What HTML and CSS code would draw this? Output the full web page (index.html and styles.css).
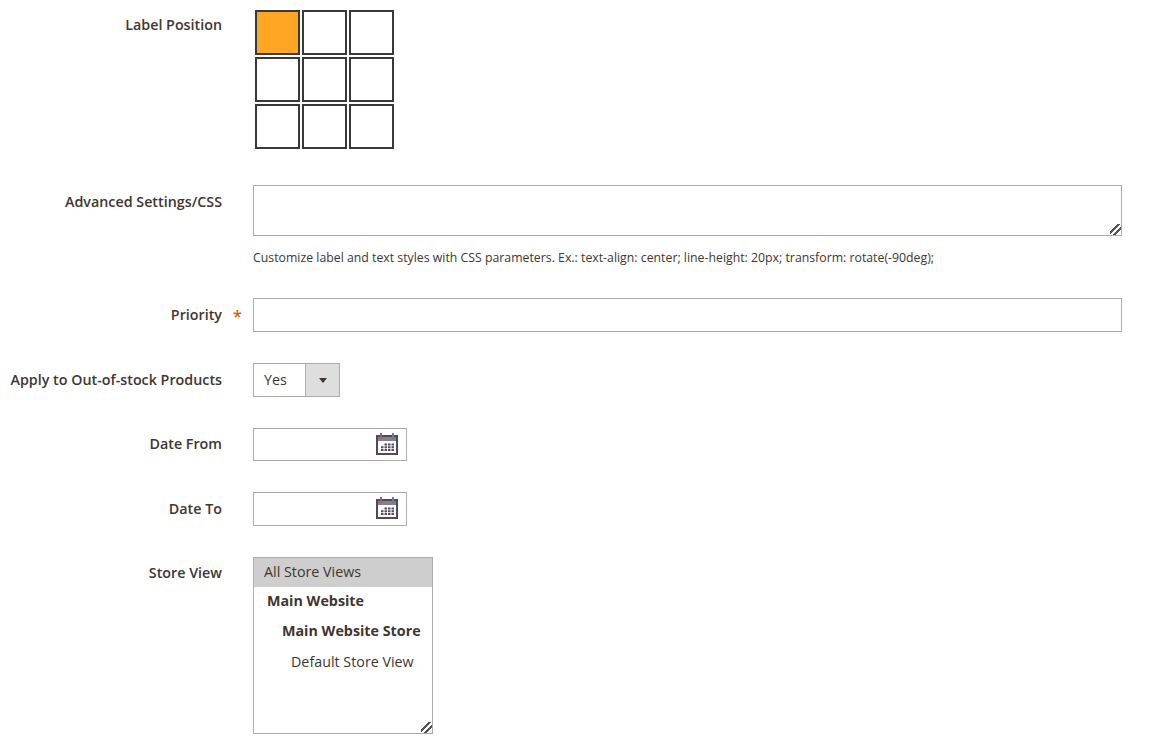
FILE: index.html
```html
<!DOCTYPE html>
<html lang="en">
<head>
    <meta charset="UTF-8">
    <title>Label Settings</title>
    <link rel="stylesheet" href="styles.css">
</head>
<body>
    <form class="settings">
        <div class="field field-position">
            <label class="field-label">Label Position</label>
            <span class="field-mark"></span>
            <div class="position-grid">
                <span class="cell cell-active"></span>
                <span class="cell"></span>
                <span class="cell"></span>
                <span class="cell"></span>
                <span class="cell"></span>
                <span class="cell"></span>
                <span class="cell"></span>
                <span class="cell"></span>
                <span class="cell"></span>
            </div>
        </div>

        <div class="field field-css">
            <label class="field-label">Advanced Settings/CSS</label>
            <span class="field-mark"></span>
            <div class="field-control">
                <textarea class="textarea"></textarea>
                <p class="note">Customize label and text styles with CSS parameters. Ex.: text-align: center; line-height: 20px; transform: rotate(-90deg);</p>
            </div>
        </div>

        <div class="field field-priority">
            <label class="field-label">Priority</label>
            <span class="field-mark">*</span>
            <input class="input input-wide" type="text">
        </div>

        <div class="field field-stock">
            <label class="field-label">Apply to Out-of-stock Products</label>
            <span class="field-mark"></span>
            <div class="select">
                <span class="select-value">Yes</span>
                <span class="select-arrow"></span>
            </div>
        </div>

        <div class="field field-from">
            <label class="field-label">Date From</label>
            <span class="field-mark"></span>
            <div class="date">
                <svg class="date-icon" viewBox="0 0 22 22" width="22" height="22">
                    <rect x="1" y="3" width="20" height="18" fill="#fff" stroke="#514b50" stroke-width="2"/>
                    <rect x="2" y="4" width="18" height="4" fill="#8a7f83"/>
                    <rect x="4" y="0" width="2" height="6" fill="#9a5f7c"/>
                    <rect x="16" y="0" width="2" height="6" fill="#5f7fa8"/>
                    <path d="M8.500 10.500h2.500v2h-2.500zM12 10.500h2.500v2H12zM15.500 10.500H18v2h-2.500zM5 13.200h2.500v2H5zM8.500 13.200h2.500v2h-2.500zM12 13.200h2.500v2H12zM15.500 13.200H18v2h-2.500zM5 15.900h2.500v2H5zM8.500 15.900h2.500v2h-2.500zM12 15.900h2.500v2H12zM15.500 15.900H18v2h-2.500z" fill="#5a4a68"/>
                </svg>
            </div>
        </div>

        <div class="field field-to">
            <label class="field-label">Date To</label>
            <span class="field-mark"></span>
            <div class="date date-tall">
                <svg class="date-icon" viewBox="0 0 22 22" width="22" height="22">
                    <rect x="1" y="3" width="20" height="18" fill="#fff" stroke="#514b50" stroke-width="2"/>
                    <rect x="2" y="4" width="18" height="4" fill="#8a7f83"/>
                    <rect x="4" y="0" width="2" height="6" fill="#9a5f7c"/>
                    <rect x="16" y="0" width="2" height="6" fill="#5f7fa8"/>
                    <path d="M8.500 10.500h2.500v2h-2.500zM12 10.500h2.500v2H12zM15.500 10.500H18v2h-2.500zM5 13.200h2.500v2H5zM8.500 13.200h2.500v2h-2.500zM12 13.200h2.500v2H12zM15.500 13.200H18v2h-2.500zM5 15.900h2.500v2H5zM8.500 15.900h2.500v2h-2.500zM12 15.900h2.500v2H12zM15.500 15.900H18v2h-2.500z" fill="#5a4a68"/>
                </svg>
            </div>
        </div>

        <div class="field field-store">
            <label class="field-label">Store View</label>
            <span class="field-mark"></span>
            <div class="store-list">
                <div class="store-item store-all">All Store Views</div>
                <div class="store-item store-site">Main Website</div>
                <div class="store-item store-group">Main Website Store</div>
                <div class="store-item store-view">Default Store View</div>
            </div>
        </div>
    </form>
</body>
</html>
```

FILE: styles.css
```css
* {
    box-sizing: border-box;
}
body {
    margin: 0;
    background-color: #fff;
    color: #41362f;
    font-family: "Open Sans", sans-serif;
    font-size: 14.3px;
}
.settings {
    padding-top: 10px;
}
.field {
    display: grid;
    grid-template-columns: 222px 31px 869px;
    align-items: start;
}
.field-label {
    font-weight: 600;
    text-align: right;
    line-height: 20px;
    padding-top: 5px;
}
.field-mark {
    color: #eb5202;
    font-size: 16px;
    font-weight: 600;
    line-height: 20px;
    padding: 8px 0 0 11px;
}

.field-css {
    margin-top: 36px;
}
.field-css .field-label {
    padding-top: 7px;
}
.field-priority {
    margin-top: 31px;
}
.field-priority .field-label,
.field-stock .field-label,
.field-to .field-label {
    padding-top: 7px;
}
.field-from .field-label,
.field-store .field-label {
    padding-top: 6px;
}
.field-stock {
    margin-top: 31px;
}
.field-from {
    margin-top: 31px;
}
.field-to {
    margin-top: 31px;
}
.field-store {
    margin-top: 31px;
}

.position-grid {
    display: grid;
    grid-template-columns: repeat(3, 45px);
    grid-auto-rows: 45px;
    gap: 2px;
    margin-left: 2px;
}
.cell {
    border: 2px solid #393939;
    background-color: #fff;
}
.cell-active {
    background-color: #ffa724;
}

.textarea {
    display: block;
    width: 869px;
    height: 51px;
    border: 1px solid #adadad;
    resize: both;
    outline: none;
}
.textarea::-webkit-resizer,
.store-list::-webkit-resizer {
    background: linear-gradient(135deg, transparent 36%, #555 36%, #555 47%, transparent 47%, transparent 62%, #555 62%, #555 73%, transparent 73%) no-repeat right bottom / 11px 11px;
}
.note {
    margin: 13px 0 0;
    font-size: 12.3px;
    line-height: 18px;
    color: #41362f;
}
.input {
    height: 34px;
    border: 1px solid #adadad;
    outline: none;
}
.input-wide {
    width: 869px;
}

.select {
    display: flex;
    width: 87px;
    height: 34px;
    border: 1px solid #adadad;
}
.select-value {
    flex: 1;
    padding-left: 10px;
    line-height: 31px;
}
.select-arrow {
    display: flex;
    align-items: center;
    justify-content: center;
    width: 34px;
    background-color: #dedede;
    border-left: 1px solid #adadad;
}
.select-arrow::before {
    content: "";
    border-top: 5px solid #41362f;
    border-left: 4px solid transparent;
    border-right: 4px solid transparent;
}

.date {
    display: flex;
    align-items: center;
    justify-content: flex-end;
    width: 154px;
    height: 33px;
    border: 1px solid #adadad;
    padding: 0 8px 2px 0;
}
.date-tall {
    height: 34px;
}

.store-list {
    width: 180px;
    height: 177px;
    border: 1px solid #adadad;
    overflow: auto;
    resize: both;
}
.store-item {
    line-height: 28px;
    padding-bottom: 2px;
    white-space: nowrap;
}
.store-all {
    height: 29px;
    line-height: 27px;
    padding-left: 10px;
    background-color: #cecece;
}
.store-site {
    padding-left: 13px;
    font-weight: 700;
}
.store-group {
    padding-left: 28px;
    font-weight: 700;
}
.store-view {
    padding-left: 37px;
    line-height: 29px;
}
```
